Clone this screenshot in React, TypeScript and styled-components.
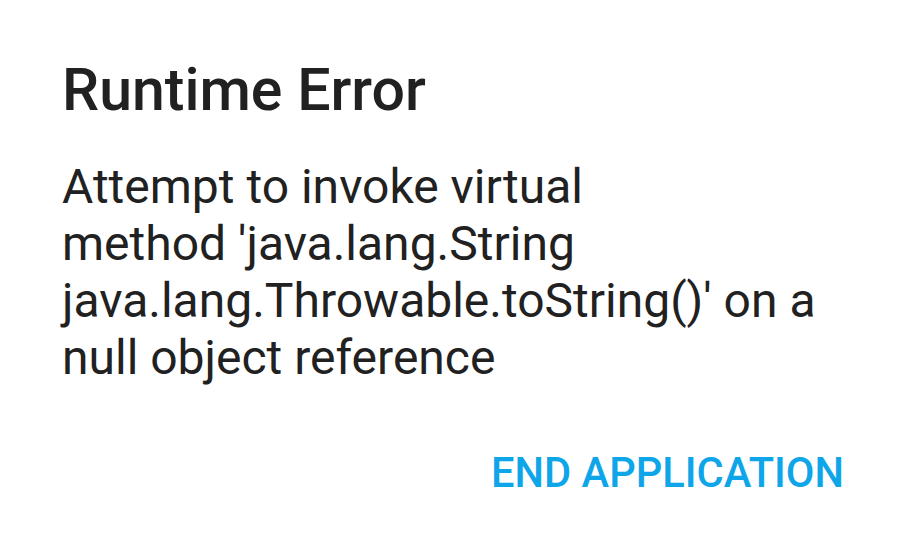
import React from "react";
import styled, { createGlobalStyle } from "styled-components";

const Global = createGlobalStyle`
  html, body { margin: 0; padding: 0; background: #ffffff; }
  body { font-family: Roboto, "Noto Sans", sans-serif; -webkit-font-smoothing: antialiased; }
`;

const Dialog = styled.div`
  box-sizing: border-box;
  width: 904px;
  height: 546px;
  padding: 55px 60px 0 62px;
  display: flex;
  flex-direction: column;
  background: #ffffff;
`;

const Title = styled.h1`
  margin: 0;
  font-family: Roboto, sans-serif;
  font-weight: 500;
  font-size: 59px;
  line-height: 70px;
  color: #212121;
`;

const Message = styled.p`
  margin: 33px 0 0 0;
  font-family: Roboto, sans-serif;
  font-weight: 400;
  font-size: 48px;
  line-height: 57px;
  color: #212121;
`;

const Actions = styled.div`
  display: flex;
  justify-content: flex-end;
  margin-top: 62px;
`;

const TextButton = styled.button`
  border: none;
  background: transparent;
  padding: 0;
  margin: 0;
  font-family: Roboto, sans-serif;
  font-weight: 500;
  font-size: 41.6px;
  line-height: 50px;
  color: #0ea5e9;
  text-transform: uppercase;
  cursor: pointer;
`;

const lines = [
  "Attempt to invoke virtual",
  "method 'java.lang.String",
  "java.lang.Throwable.toString()' on a",
  "null object reference",
];

export default function App() {
  return (
    <>
      <Global />
      <Dialog>
        <Title>Runtime Error</Title>
        <Message>
          {lines.map((l, i) => (
            <React.Fragment key={i}>
              {l}
              {i < lines.length - 1 && <br />}
            </React.Fragment>
          ))}
        </Message>
        <Actions>
          <TextButton>End Application</TextButton>
        </Actions>
      </Dialog>
    </>
  );
}
